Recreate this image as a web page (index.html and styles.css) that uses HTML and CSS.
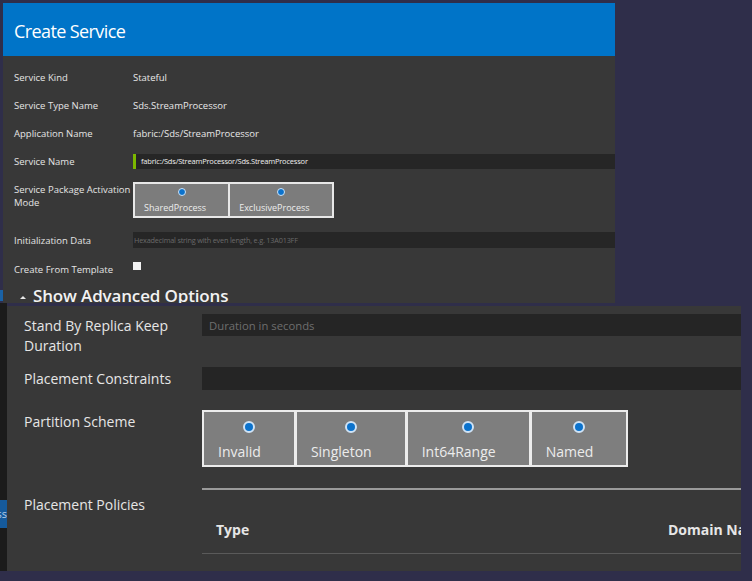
FILE: index.html
```html
<!DOCTYPE html>
<html lang="en">
<head>
<meta charset="utf-8">
<title>Create Service</title>
<link rel="stylesheet" href="styles.css">
</head>
<body>
<div class="desk">
  <div class="upper">
    <div class="gutter-top"><span class="mark"></span></div>
    <section class="win-top">
      <header class="head">Create Service</header>
      <div class="body-top">
        <div class="row"><span class="lbl">Service Kind</span><span class="val">Stateful</span></div>
        <div class="row"><span class="lbl">Service Type Name</span><span class="val">Sds.StreamProcessor</span></div>
        <div class="row"><span class="lbl">Application Name</span><span class="val">fabric:/Sds/StreamProcessor</span></div>
        <div class="row"><span class="lbl">Service Name</span><div class="tinput valid">fabric:/Sds/StreamProcessor/Sds.StreamProcessor</div></div>
        <div class="row row-top"><span class="lbl lbl-2">Service Package Activation<br>Mode</span>
          <div class="sgroup">
            <div class="sopt"><span class="sdot"></span><span class="stext">SharedProcess</span></div>
            <div class="sopt"><span class="sdot"></span><span class="stext">ExclusiveProcess</span></div>
          </div>
        </div>
        <div class="row row-init"><span class="lbl">Initialization Data</span><div class="tinput ph">Hexadecimal string with even length, e.g. 13A013FF</div></div>
        <div class="row"><span class="lbl">Create From Template</span><span class="check"></span></div>
        <div class="adv"><span class="tri"></span><span class="adv-text">Show Advanced Options</span></div>
      </div>
    </section>
  </div>
  <div class="lower">
    <div class="edge"><span class="edge-tab">ss</span></div>
    <section class="panel">
      <div class="brow brow-a">
        <span class="blbl">Stand By Replica Keep<br>Duration</span>
        <div class="bfield"><div class="binput ph">Duration in seconds</div></div>
      </div>
      <div class="brow brow-b">
        <span class="blbl">Placement Constraints</span>
        <div class="bfield"><div class="binput"></div></div>
      </div>
      <div class="brow brow-c">
        <span class="blbl">Partition Scheme</span>
        <div class="bfield">
          <div class="bgroup">
            <div class="bopt"><span class="bdot"></span><span class="btext">Invalid</span></div>
            <div class="bopt"><span class="bdot"></span><span class="btext">Singleton</span></div>
            <div class="bopt"><span class="bdot"></span><span class="btext">Int64Range</span></div>
            <div class="bopt"><span class="bdot"></span><span class="btext">Named</span></div>
          </div>
        </div>
      </div>
      <div class="brow brow-d">
        <span class="blbl">Placement Policies</span>
        <div class="bfield">
          <div class="table">
            <div class="th">Type</div>
            <div class="th">Domain Name</div>
          </div>
        </div>
      </div>
    </section>
  </div>
</div>
</body>
</html>
```
FILE: styles.css
```css
* { box-sizing: border-box; margin: 0; padding: 0; }
html, body { width: 752px; height: 581px; overflow: hidden; }
body {
  background: #2f2e4a;
  font-family: "Open Sans", "Noto Sans", sans-serif;
  color: #e4e4e4;
}
.desk { display: flex; flex-direction: column; height: 581px; }

/* ---------- upper window ---------- */
.upper { display: flex; padding-top: 3px; height: 303px; }
.gutter-top {
  width: 3px; flex: none;
  display: flex; flex-direction: column; justify-content: flex-end;
  padding-bottom: 2px;
}
.gutter-top .mark { height: 11px; background: #1a62a6; }
.win-top {
  width: 612px; height: 300px; flex: none;
  display: flex; flex-direction: column;
  overflow: hidden; background: #383838;
}
.head {
  height: 53px; flex: none;
  background: #0074c8; color: #fff;
  font-size: 18px; letter-spacing: -0.6px;
  padding: 3px 0 0 11px;
  display: flex; align-items: center;
}
.body-top { flex: 1; padding: 7px 0 0 11px; font-size: 9.5px; }
.row { display: flex; align-items: center; min-height: 28px; }
.row-top { align-items: flex-start; padding: 7px 0; }
.row-init { min-height: 30px; }
.lbl { width: 119px; flex: none; line-height: 13px; }
.lbl-2 { padding-top: 1px; }
.val { color: #e8e8e8; }
.tinput {
  flex: 1; height: 15px; background: #262626;
  display: flex; align-items: center;
  font-size: 7.5px; letter-spacing: -0.2px; padding-left: 8px;
  white-space: nowrap; overflow: hidden;
}
.tinput.valid { border-left: 3px solid #7cb800; padding-left: 5px; color: #eee; }
.tinput.ph { color: #6a6a6a; padding-left: 1px; height: 16px; font-size: 7.3px; letter-spacing: -0.2px; }
.check {
  width: 8px; height: 8px; background: #f2f2f2;
  margin-bottom: 6px;
}
.sgroup {
  display: flex; gap: 2px;
  background: #e8e8e8; padding: 2px;
  height: 36px;
}
.sopt {
  background: #7c7c7c;
  display: flex; flex-direction: column; align-items: center;
  padding-top: 4px;
}
.sdot {
  width: 8px; height: 8px; border-radius: 50%;
  background: #0b72cc; border: 1.5px solid #cfe3f6;
}
.stext {
  align-self: flex-start;
  margin: 5px 22px 0 9px;
  font-size: 9px; color: #ececec; line-height: 13px;
}
.adv {
  display: flex; align-items: center;
  height: 22px; margin-top: 1px; padding-left: 6px;
}
.tri {
  width: 0; height: 0;
  border-left: 3px solid transparent; border-right: 3px solid transparent;
  border-bottom: 3px solid #e8e8e8;
  margin: 5px 7px 0 0;
}
.adv-text { font-size: 17px; font-weight: 600; color: #f2f2f2; letter-spacing: -0.15px; }

/* ---------- lower window ---------- */
.lower { display: flex; height: 268px; }
.edge {
  width: 7px; flex: none; background: #1b1b1b;
  display: flex; flex-direction: column; justify-content: flex-start;
  padding-top: 197px; overflow: hidden;
}
.edge-tab {
  height: 28px; background: #155a9c; color: #b8cde6;
  font-size: 11px; line-height: 28px; text-align: right;
  white-space: nowrap; overflow: hidden; direction: rtl;
}
.panel {
  width: 734px; height: 265px; flex: none;
  margin-top: 3px;
  background: #383838;
  padding: 8px 0 0 17px;
  font-size: 14px; overflow: hidden;
}
.brow { display: flex; }
.blbl { width: 178px; flex: none; line-height: 20px; color: #e6e6e6; }
.bfield { flex: 1; min-width: 0; }
.brow-a { height: 42px; }
.brow-a .blbl { padding-top: 2px; }
.binput {
  height: 22px; background: #252525;
  display: flex; align-items: center;
  padding-left: 7px; font-size: 11.3px;
}
.binput.ph { color: #6e6e6e; }
.brow-b { margin-top: 11px; align-items: center; }
.brow-b .binput { height: 23px; }
.brow-c { margin-top: 20px; }
.brow-c .blbl { padding-top: 2px; }
.bgroup {
  display: inline-flex; gap: 3px;
  background: #ececec; padding: 2px;
  height: 57px;
}
.bopt {
  background: #7e7e7e;
  display: flex; flex-direction: column; align-items: center;
  padding-top: 9px;
}
.bdot {
  width: 12px; height: 12px; border-radius: 50%;
  background: #0b72cc; border: 2px solid #cfe3f6;
}
.btext {
  align-self: flex-start;
  margin: 9px 33px 0 14px;
  line-height: 20px; color: #ececec;
}
.brow-d { margin-top: 21px; }
.brow-d .blbl { padding-top: 7px; }
.table {
  display: grid; grid-template-columns: 466px 1fr;
  height: 66px;
  border-top: 2px solid #9a9a9a;
  border-bottom: 1px solid #5a5a5a;
  align-items: end;
  padding-bottom: 13px;
}
.th {
  font-weight: 700; line-height: 20px; color: #e6e6e6;
  white-space: nowrap; overflow: hidden;
}
.th:first-child { padding-left: 14px; }
```
